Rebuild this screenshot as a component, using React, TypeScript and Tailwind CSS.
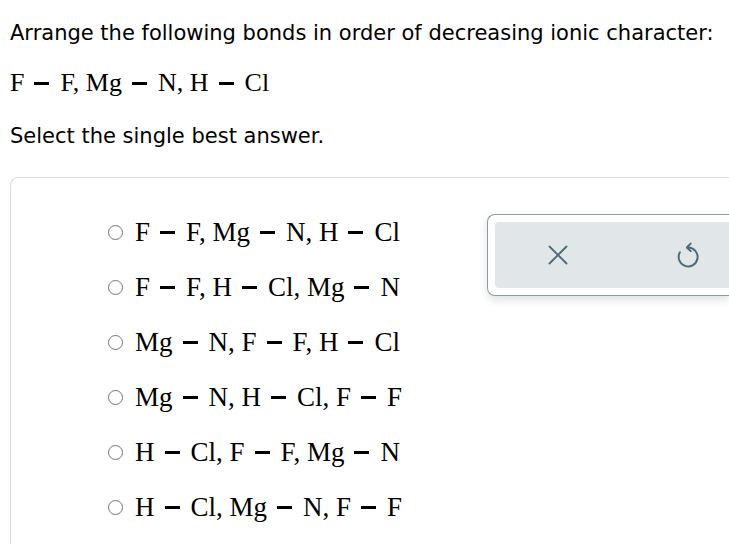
import { X } from 'lucide-react';

const options = [
    ['F', 'F', 'Mg', 'N', 'H', 'Cl'],
    ['F', 'F', 'H', 'Cl', 'Mg', 'N'],
    ['Mg', 'N', 'F', 'F', 'H', 'Cl'],
    ['Mg', 'N', 'H', 'Cl', 'F', 'F'],
    ['H', 'Cl', 'F', 'F', 'Mg', 'N'],
    ['H', 'Cl', 'Mg', 'N', 'F', 'F'],
];

function Bond({ a, b }: { a: string; b: string }) {
    return (
        <span>
            {a}
            <span className="inline-block align-middle relative top-[-2px] w-[15px] h-[3px] bg-black ml-[10px] mr-[11px]" />
            {b}
        </span>
    );
}

function BondList({ atoms, size }: { atoms: string[]; size: 'sm' | 'lg' }) {
    return (
        <span className={`font-['Liberation_Serif','Times_New_Roman',serif] ${size === 'lg' ? 'text-[27px]' : 'text-[26px]'} leading-none text-black whitespace-nowrap`}>
            <Bond a={atoms[0]} b={atoms[1]} />, <Bond a={atoms[2]} b={atoms[3]} />, <Bond a={atoms[4]} b={atoms[5]} />
        </span>
    );
}

function UndoIcon() {
    return (
        <svg width="36" height="36" viewBox="0 0 24 24" fill="none" stroke="#4d6a79" strokeWidth="1.3" strokeLinecap="round" strokeLinejoin="round">
            <path d="M12 7 A6.3 6.3 0 1 1 6.6 10.2" />
            <path d="M13.8 4.4 L11.2 7 L13.8 9.4" />
        </svg>
    );
}

export default function App() {
    return (
        <div className="w-[729px] h-[544px] overflow-hidden bg-white font-['DejaVu_Sans','Verdana',sans-serif] text-black">
            <div className="pl-[10px] pt-[20px]">
                <p className="text-[21px] leading-[26px] whitespace-nowrap">Arrange the following bonds in order of decreasing ionic character:</p>
                <div className="mt-[24px]">
                    <BondList atoms={options[0]} size="sm" />
                </div>
                <p className="mt-[25px] text-[21px] leading-[26px]">Select the single best answer.</p>
            </div>

            <div className="ml-[10px] mt-[28px] rounded-tl-[8px] border-t border-l border-[#d6dee1] h-[400px] flex">
                <div className="pl-[97px] pt-[41px] flex flex-col gap-[29px]">
                    {options.map((o, i) => (
                        <label key={i} className="flex items-center h-[26px]">
                            <span className="w-[15px] h-[15px] rounded-full border border-[#767676] mr-[12px] shrink-0" />
                            <BondList atoms={o} size="lg" />
                        </label>
                    ))}
                </div>
                <div className="ml-auto mt-[36px]">
                    <div className="w-[242px] overflow-hidden rounded-l-[8px] border border-r-0 border-[#8a9ba4] bg-white p-[7px] pr-0 shadow-[0_4px_10px_rgba(0,0,0,0.12)]">
                        <div className="h-[66px] rounded-l-[4px] bg-[#e1e6e9] flex items-center">
                            <div className="w-[126px] shrink-0 flex justify-center">
                                <X className="w-[34px] h-[34px] text-[#4d6a79]" strokeWidth={1.3} />
                            </div>
                            <div className="w-[134px] shrink-0 flex justify-center">
                                <UndoIcon />
                            </div>
                        </div>
                    </div>
                </div>
            </div>
        </div>
    );
}
